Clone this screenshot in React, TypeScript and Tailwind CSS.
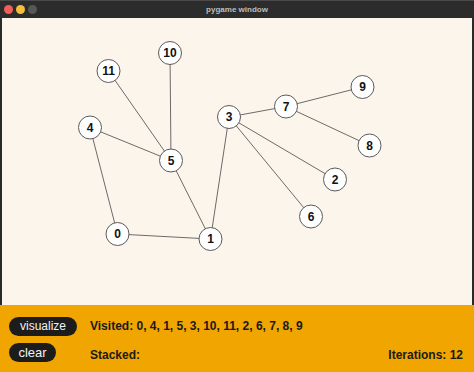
import React from "react";

const nodes: Record<number, [number, number]> = {
  0: [117.5, 234],
  1: [210.5, 239],
  2: [335, 179.5],
  3: [229, 117],
  4: [90, 127.5],
  5: [171, 160.5],
  6: [311, 216.5],
  7: [286, 106.5],
  8: [369.5, 145.5],
  9: [362.5, 87],
  10: [170, 53],
  11: [108.5, 71],
};

const edges: [number, number][] = [
  [0, 4],
  [0, 1],
  [1, 5],
  [1, 3],
  [4, 5],
  [11, 5],
  [10, 5],
  [3, 7],
  [3, 2],
  [3, 6],
  [7, 9],
  [7, 8],
];

export default function App() {
  const top = 18;
  return (
    <div
      className="w-[474px] h-[372px] flex flex-col bg-[#2a2a2a] overflow-hidden"
      style={{ fontFamily: '"Liberation Sans", Arial, sans-serif' }}
    >
      <div className="relative h-[18px] flex items-center justify-center bg-[#2c2c2c] border-t border-[#4a4a4a]">
        <div className="absolute left-[4px] top-[4px] flex gap-[3px]">
          <span className="w-[9px] h-[9px] rounded-full bg-[#ee5f5a]" />
          <span className="w-[9px] h-[9px] rounded-full bg-[#f5be3b]" />
          <span className="w-[9px] h-[9px] rounded-full bg-[#575757]" />
        </div>
        <span className="text-[8px] font-bold text-[#bdbdbd] leading-none">pygame window</span>
      </div>
      <div className="flex-1 flex flex-col pl-[2px] pr-[2px]">
        <div className="flex-1 bg-[#fcf5ec]">
          <svg width="470" height="287" viewBox={`2 ${top} 470 287`} className="block">
            {edges.map(([a, b], i) => (
              <line
                key={i}
                x1={nodes[a][0]}
                y1={nodes[a][1]}
                x2={nodes[b][0]}
                y2={nodes[b][1]}
                stroke="#6b6b6b"
                strokeWidth={1}
              />
            ))}
            {Object.entries(nodes).map(([k, [x, y]]) => (
              <g key={k}>
                <circle cx={x} cy={y} r={11.5} fill="#ffffff" stroke="#5a5a5a" strokeWidth={1} />
                <text
                  x={x}
                  y={y + 4.2}
                  textAnchor="middle"
                  fontSize={12}
                  fontWeight={700}
                  fill="#111"
                  fontFamily='"Liberation Sans", Arial, sans-serif'
                >
                  {k}
                </text>
              </g>
            ))}
          </svg>
        </div>
      </div>
      <div className="h-[67px] bg-[#f0a500] flex flex-col justify-center gap-[7px] pl-[9px] pr-[11px] pt-[1px]">
        <div className="flex items-center">
          <div className="w-[68px] h-[19px] rounded-full bg-[#1c1c1c] text-[#f2f2f2] text-[12px] flex items-center justify-center leading-none">
            visualize
          </div>
          <span className="ml-[13px] text-[12px] font-bold text-[#1a1a1a] leading-none">
            Visited: 0, 4, 1, 5, 3, 10, 11, 2, 6, 7, 8, 9
          </span>
        </div>
        <div className="flex items-center">
          <div className="w-[47px] h-[19px] rounded-full bg-[#1c1c1c] text-[#f2f2f2] text-[13px] flex items-center justify-center leading-none">
            clear
          </div>
          <span className="ml-[34px] mt-[5px] text-[12px] font-bold text-[#1a1a1a] leading-none">Stacked:</span>
          <span className="ml-auto mt-[5px] text-[12px] font-bold text-[#1a1a1a] leading-none">
            Iterations: 12
          </span>
        </div>
      </div>
    </div>
  );
}
